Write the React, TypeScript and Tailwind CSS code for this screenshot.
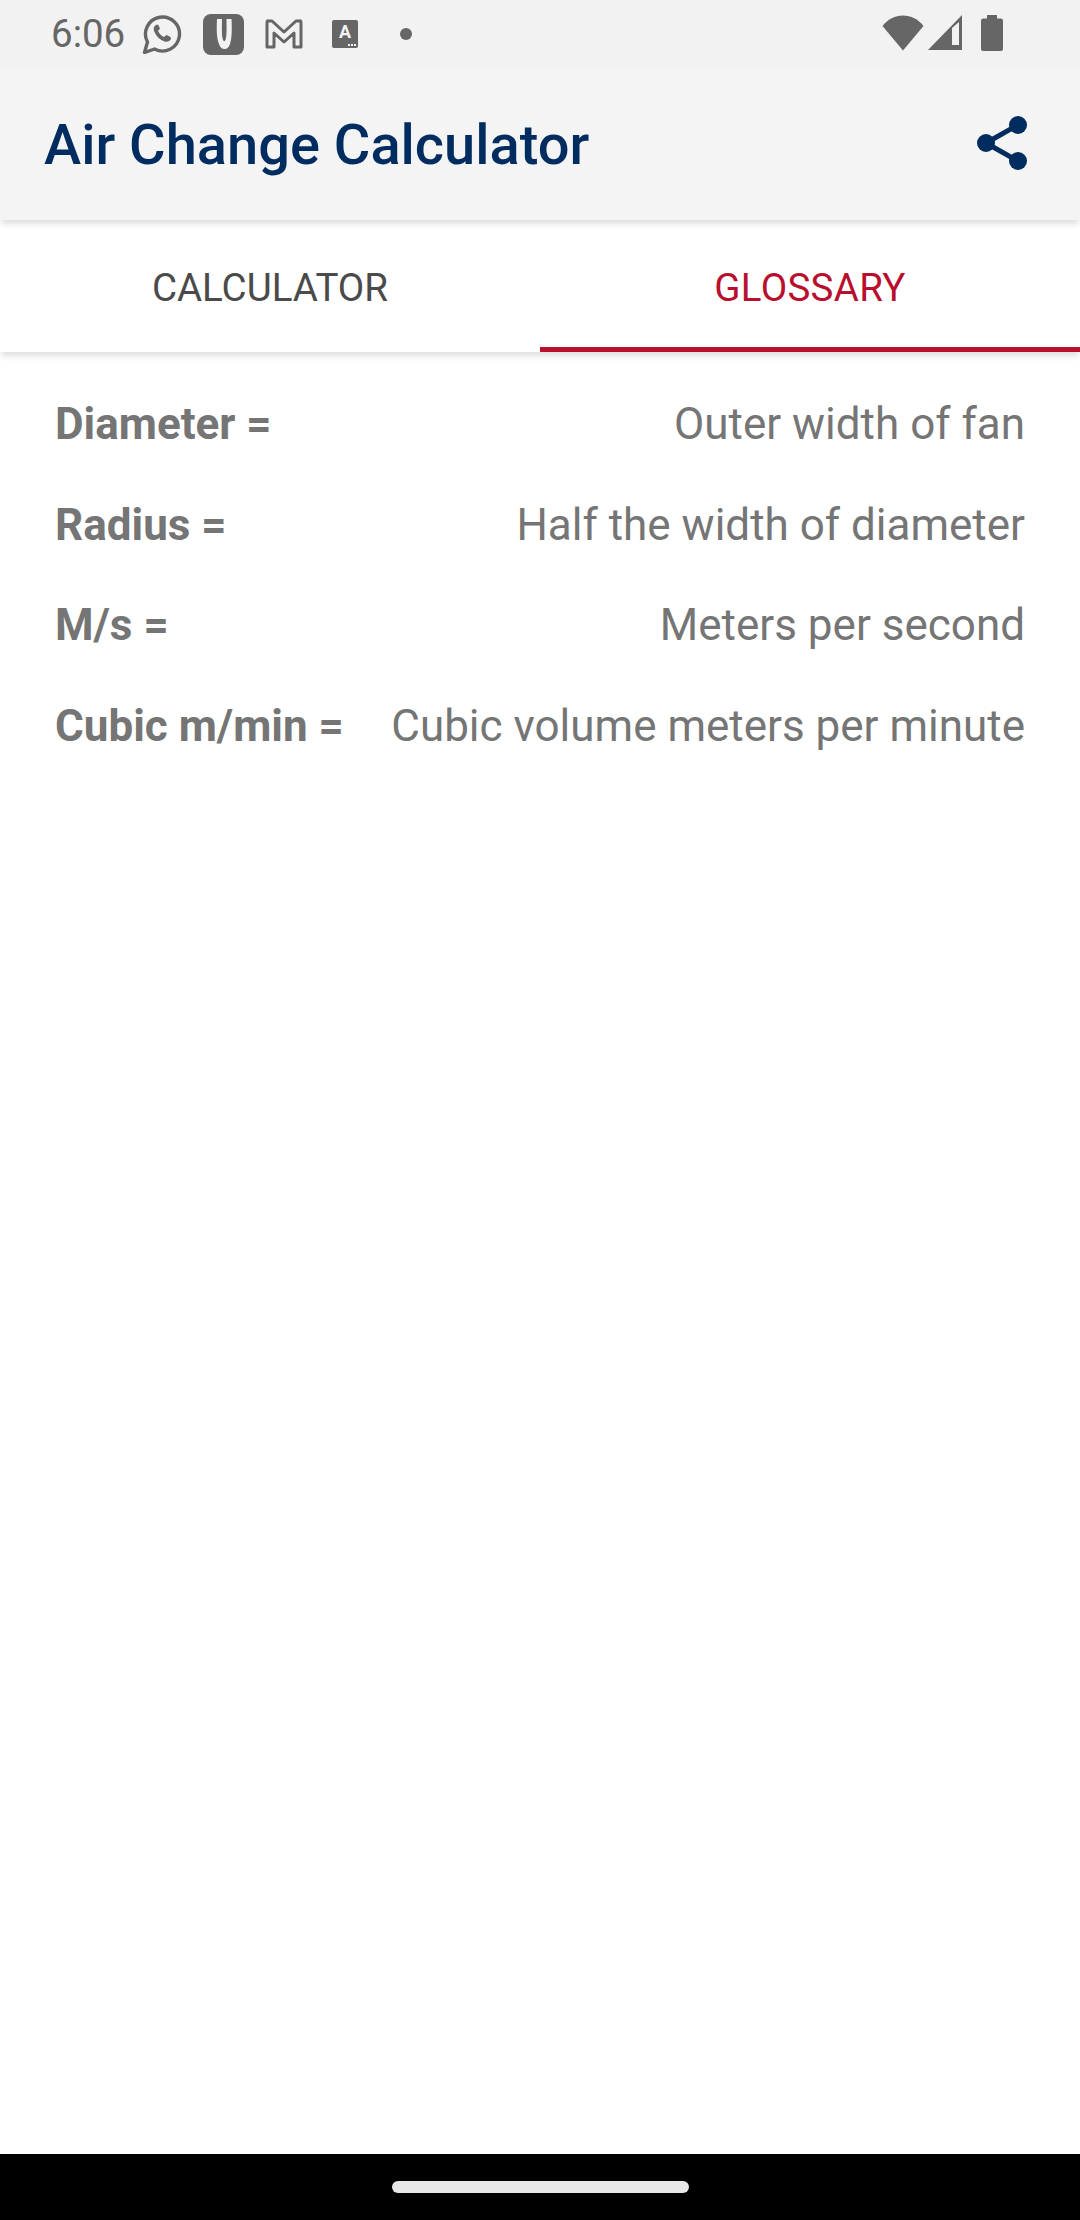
const rows = [
  { term: 'Diameter =', meaning: 'Outer width of fan' },
  { term: 'Radius =', meaning: 'Half the width of diameter' },
  { term: 'M/s =', meaning: 'Meters per second' },
  { term: 'Cubic m/min =', meaning: 'Cubic volume meters per minute' },
]

function StatusBar() {
  return (
    <div className="h-[68px] bg-[#f2f2f2] flex items-center justify-between pl-[51px] pr-[77px] text-[#666666]">
      <div className="flex items-center">
        <span className="text-[38.5px] leading-none w-[74px]">6:06</span>
        {/* whatsapp */}
        <svg className="ml-[17px]" width="40" height="40" viewBox="0 0 40 40" fill="none">
          <path d="M2.5 38.5l3-10.5A17 17 0 1 1 12.5 35z" stroke="#666666" strokeWidth="3.4" strokeLinejoin="round" />
          <path d="M14 11c-2 1-3 3.500-1.500 7 2 4.500 5.500 8 10 9.500 3 1 5.500-.5 6.500-2.500l-.5-2-4-2-2.500 2c-2.500-1-5-3.500-6-6l2-2.500-2-4z" fill="#666666" />
        </svg>
        {/* app icon */}
        <div className="ml-[21px] w-[41px] h-[41px] rounded-[8px] bg-[#666666] flex items-center justify-center">
          <svg width="20" height="32" viewBox="0 0 20 32" fill="#f2f2f2">
            <path d="M3 1h5c0 9-.5 16 1 21 .5 1.500 2 1.500 2.500 0 1.500-5 1-12 1-21h5c.5 10 .5 19-1.500 25-1 3.500-3 5-5.500 5s-4.500-1.500-5.500-5C2.500 20 2.500 11 3 1z" />
          </svg>
        </div>
        {/* mail icon */}
        <svg className="ml-[21px]" width="38" height="30" viewBox="0 0 38 30" fill="none">
          <path d="M2 28V3c0-1 1-1.500 2-1h3l12 11L31 2h3c1-.5 2 0 2 1v25h-7V14l-10 9-10-9v14z" stroke="#666666" strokeWidth="3" strokeLinejoin="round" />
        </svg>
        {/* translate icon */}
        <div className="ml-[29px] w-[26px] h-[28px] rounded-[2px] bg-[#666666] relative flex justify-center">
          <span className="text-[#f2f2f2] text-[18px] leading-[24px] font-bold">A</span>
          <span className="absolute right-[2px] bottom-[2px] flex gap-[1px]">
            <span className="w-[2px] h-[2px] bg-[#f2f2f2]" />
            <span className="w-[2px] h-[2px] bg-[#f2f2f2]" />
            <span className="w-[2px] h-[2px] bg-[#f2f2f2]" />
          </span>
        </div>
        <div className="ml-[42px] w-3 h-3 rounded-full bg-[#666666]" />
      </div>
      <div className="flex items-center mb-[3px]">
        <svg width="42" height="36" viewBox="0 0 42 36" fill="#666666">
          <path d="M0.500 11C6 4 13 .5 21 .5S36 4 41.500 11L21 35.500z" />
        </svg>
        <svg className="ml-[4px]" width="34" height="35" viewBox="0 0 34 35">
          <path d="M34 0v35H0z" fill="#666666" />
          <path d="M24 13L31 7V30H24z" fill="#f2f2f2" />
        </svg>
        <svg className="ml-[19px]" width="22" height="36" viewBox="0 0 22 36" fill="#666666">
          <path d="M6 0h10v3.500h4c1 0 2 1 2 2V34c0 1-1 2-2 2H2c-1 0-2-1-2-2V5.500c0-1 1-2 2-2h4z" />
        </svg>
      </div>
    </div>
  )
}

export default function App() {
  return (
    <div className="w-[1080px] h-[2220px] flex flex-col bg-white font-['Roboto',sans-serif]">
      <StatusBar />

      <div className="h-[152px] bg-[#f4f4f4] flex items-center justify-between pl-[44px] pr-[53px] relative z-20 shadow-[0_5px_6px_-1px_rgba(0,0,0,0.13)]">
        <h1 className="text-[56px] leading-none font-medium text-[#002c5f] mt-[2px]">Air Change Calculator</h1>
        <svg className="mb-[2px]" width="50" height="54" viewBox="0 0 50 54" fill="none">
          <line x1="9" y1="27" x2="41" y2="9" stroke="#002c5f" strokeWidth="5" />
          <line x1="9" y1="27" x2="41" y2="45" stroke="#002c5f" strokeWidth="5" />
          <circle cx="9" cy="27" r="9" fill="#002c5f" />
          <circle cx="41" cy="9" r="9" fill="#002c5f" />
          <circle cx="41" cy="45" r="9" fill="#002c5f" />
        </svg>
      </div>

      <div className="h-[132px] flex bg-white relative z-10 shadow-[0_5px_6px_-1px_rgba(0,0,0,0.13)]">
        <div className="w-1/2 flex items-center justify-center text-[38.5px] text-[#4a4a4a] pt-[4px]">CALCULATOR</div>
        <div className="w-1/2 flex items-center justify-center text-[38.5px] tracking-[0.3px] text-[#b90f2e] border-b-[5px] border-[#b90f2e] pt-[9px]">GLOSSARY</div>
      </div>

      <div className="flex-1 flex flex-col gap-[50.5px] px-[55px] pt-[47px] bg-white">
        {rows.map((row) => (
          <div key={row.term} className="flex justify-between text-[44px] leading-[50px] text-[#757575]">
            <span className="font-bold">{row.term}</span>
            <span>{row.meaning}</span>
          </div>
        ))}
      </div>

      <div className="h-[66px] bg-black flex items-center justify-center">
        <div className="w-[297px] h-[12px] rounded-full bg-[#e8e8e8]" />
      </div>
    </div>
  )
}
